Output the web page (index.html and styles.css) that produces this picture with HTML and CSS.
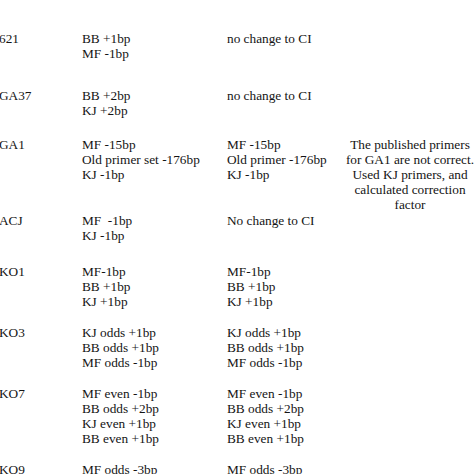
FILE: index.html
```html
<!DOCTYPE html>
<html>
<head>
<meta charset="utf-8">
<link rel="stylesheet" href="styles.css">
</head>
<body>
<div class="table">
  <div class="row r1">
    <div class="c1">621</div>
    <div class="c2">BB +1bp<br>MF -1bp</div>
    <div class="c3">no change to CI</div>
    <div class="c4"></div>
  </div>
  <div class="row r2">
    <div class="c1">GA37</div>
    <div class="c2">BB +2bp<br>KJ +2bp</div>
    <div class="c3">no change to CI</div>
    <div class="c4"></div>
  </div>
  <div class="row r3">
    <div class="c1">GA1</div>
    <div class="c2">MF -15bp<br>Old primer set -176bp<br>KJ -1bp</div>
    <div class="c3">MF -15bp<br>Old primer -176bp<br>KJ -1bp</div>
    <div class="c4">The published primers<br>for GA1 are not correct.<br>Used KJ primers, and<br>calculated correction<br>factor</div>
  </div>
  <div class="row r4">
    <div class="c1">ACJ</div>
    <div class="c2">MF&nbsp; -1bp<br>KJ -1bp</div>
    <div class="c3">No change to CI</div>
    <div class="c4"></div>
  </div>
  <div class="row r5">
    <div class="c1">KO1</div>
    <div class="c2">MF-1bp<br>BB +1bp<br>KJ +1bp</div>
    <div class="c3">MF-1bp<br>BB +1bp<br>KJ +1bp</div>
    <div class="c4"></div>
  </div>
  <div class="row r6">
    <div class="c1">KO3</div>
    <div class="c2">KJ odds +1bp<br>BB odds +1bp<br>MF odds -1bp</div>
    <div class="c3">KJ odds +1bp<br>BB odds +1bp<br>MF odds -1bp</div>
    <div class="c4"></div>
  </div>
  <div class="row r7">
    <div class="c1">KO7</div>
    <div class="c2">MF even -1bp<br>BB odds +2bp<br>KJ even +1bp<br>BB even +1bp</div>
    <div class="c3">MF even -1bp<br>BB odds +2bp<br>KJ even +1bp<br>BB even +1bp</div>
    <div class="c4"></div>
  </div>
  <div class="row r8">
    <div class="c1">KO9</div>
    <div class="c2">MF odds -3bp</div>
    <div class="c3">MF odds -3bp</div>
    <div class="c4"></div>
  </div>
</div>
</body>
</html>
```
FILE: styles.css
```css
html, body {
  margin: 0;
  padding: 0;
  background: #ffffff;
  overflow: hidden;
}
body {
  width: 474px;
  height: 474px;
  font-family: "Liberation Serif", "Times New Roman", serif;
  font-size: 13.3px;
  line-height: 15px;
  color: #141414;
}
.table {
  display: flex;
  flex-direction: column;
  padding-top: 31.3px;
  margin-left: -1px;
  width: 476px;
}
.row {
  display: grid;
  grid-template-columns: 83px 145px 118px 130px;
}
.c1, .c2, .c3 {
  white-space: nowrap;
}
.c4 {
  text-align: center;
  white-space: nowrap;
}
.r1 { padding-bottom: 26.7px; }
.r2 { padding-bottom: 19px; }
.r3 { padding-bottom: 1px; }
.r4 { padding-bottom: 20.7px; }
.r5 { padding-bottom: 16.6px; }
.r6 { padding-bottom: 15.7px; }
.r7 { padding-bottom: 16px; }
```
